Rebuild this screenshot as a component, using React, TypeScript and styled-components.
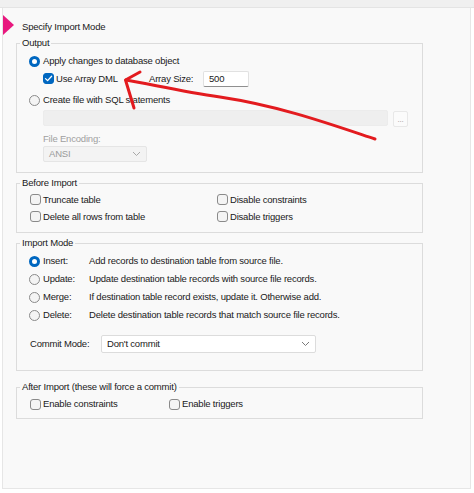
import React from "react";
import styled, { createGlobalStyle } from "styled-components";

const Global = createGlobalStyle`
  html, body { margin: 0; padding: 0; background: #ffffff; }
  body { font-family: "Liberation Sans", Arial, sans-serif; font-size: 9.5px; letter-spacing: -0.2px; color: #1a1a1a; }
  * { box-sizing: border-box; }
`;

const Page = styled.div`
  position: relative;
  width: 474px;
  height: 493px;
  overflow: hidden;
`;

const TopBand = styled.div`
  height: 8px;
  background: #f0f0f0;
  border-bottom: 1px solid #e4e4e4;
`;

const Frame = styled.div`
  margin-left: 2px;
  width: 469px;
  height: 481px;
  background: #f9f9f9;
  border: 1px solid #e6e6e6;
  border-top: none;
`;

const Header = styled.div`
  display: flex;
  align-items: flex-start;
  height: 30px;
  padding-top: 7px;
`;

const Title = styled.span`
  margin-left: 8px;
  margin-top: 2px;
  line-height: 20px;
`;

const Groups = styled.div`
  display: flex;
  flex-direction: column;
  margin-left: 13px;
  margin-top: -1px;
`;

const Group = styled.fieldset<{ $gap?: number }>`
  margin: ${(p) => p.$gap ?? 0}px 0 0 0;
  padding: 0;
  width: 407px;
  border: 1px solid #dcdcdc;
  min-inline-size: 0;
`;

const Legend = styled.legend`
  margin-left: 3px;
  padding: 0 2px;
  line-height: 12px;
  height: 12px;
`;

const Body = styled.div<{ $pt: number; $pb: number; $pl: number }>`
  display: flex;
  flex-direction: column;
  padding: ${(p) => p.$pt}px 0 ${(p) => p.$pb}px ${(p) => p.$pl}px;
`;

const Row = styled.div<{ $h?: number; $mt?: number; $indent?: number }>`
  display: flex;
  align-items: center;
  height: ${(p) => p.$h ?? 18}px;
  margin-top: ${(p) => p.$mt ?? 0}px;
  padding-left: ${(p) => p.$indent ?? 0}px;
`;

const RadioDot = styled.span<{ $on?: boolean }>`
  flex: none;
  width: 11px;
  height: 11px;
  border-radius: 50%;
  background: ${(p) => (p.$on ? "#ffffff" : "#f4f4f4")};
  border: ${(p) => (p.$on ? "3px solid #0067c0" : "1px solid #8a8a8a")};
`;

const Box = styled.span<{ $on?: boolean }>`
  flex: none;
  width: 11px;
  height: 11px;
  border-radius: 3px;
  display: flex;
  align-items: center;
  justify-content: center;
  background: ${(p) => (p.$on ? "#0067c0" : "#f4f4f4")};
  border: 1px solid ${(p) => (p.$on ? "#0067c0" : "#8a8a8a")};
`;

const Text = styled.span<{ $w?: number; $ml?: number; $muted?: boolean }>`
  margin-left: ${(p) => p.$ml ?? 3}px;
  ${(p) => (p.$w ? `width: ${p.$w}px; flex: none;` : "")}
  white-space: nowrap;
  line-height: 12px;
  color: ${(p) => (p.$muted ? "#a0a0a0" : "#1a1a1a")};
`;

const Input = styled.div<{ $w: number; $h: number; $disabled?: boolean }>`
  flex: none;
  display: flex;
  align-items: center;
  width: ${(p) => p.$w}px;
  height: ${(p) => p.$h}px;
  padding-left: 5px;
  background: ${(p) => (p.$disabled ? "#efefef" : "#ffffff")};
  border: 1px solid ${(p) => (p.$disabled ? "#ececec" : "#e1e1e1")};
  border-bottom-color: ${(p) => (p.$disabled ? "#ececec" : "#8f8f8f")};
  border-radius: 2px;
  line-height: 12px;
`;

const Combo = styled.div<{ $w: number; $h: number; $disabled?: boolean }>`
  flex: none;
  display: flex;
  align-items: center;
  justify-content: space-between;
  width: ${(p) => p.$w}px;
  height: ${(p) => p.$h}px;
  padding: 0 5px;
  background: ${(p) => (p.$disabled ? "#f3f3f3" : "#ffffff")};
  border: 1px solid ${(p) => (p.$disabled ? "#e5e5e5" : "#dcdcdc")};
  border-radius: 2px;
  color: ${(p) => (p.$disabled ? "#9a9a9a" : "#1a1a1a")};
  line-height: 12px;
`;

const BrowseBtn = styled.div`
  flex: none;
  width: 15px;
  height: 16px;
  margin-left: 5px;
  margin-top: 2px;
  display: flex;
  align-items: center;
  justify-content: center;
  background: #fbfbfb;
  border: 1px solid #e8e8e8;
  border-radius: 2px;
  color: #9a9a9a;
  font-size: 8px;
  line-height: 8px;
  padding-top: 2px;
`;

const TwoCol = styled.div<{ $col: number; $mt: number; $rh: number }>`
  display: grid;
  grid-template-columns: ${(p) => p.$col}px auto;
  grid-auto-rows: ${(p) => p.$rh}px;
  margin-top: ${(p) => p.$mt}px;
`;

const Cell = styled.div`
  display: flex;
  align-items: center;
`;

const ModeGrid = styled.div`
  display: grid;
  grid-template-columns: 14px 46px auto;
  grid-auto-rows: 18px;
  align-items: center;
  margin-top: 3px;
`;

const Overlay = styled.svg`
  position: absolute;
  left: 0;
  top: 0;
  pointer-events: none;
`;

const Check = () => (
  <svg width="9" height="9" viewBox="0 0 9 9">
    <path d="M1.5 4.6 L3.6 6.6 L7.6 2.3" fill="none" stroke="#fff" strokeWidth="1.3" strokeLinecap="round" strokeLinejoin="round" />
  </svg>
);

const Chevron = ({ color }: { color: string }) => (
  <svg width="9" height="6" viewBox="0 0 9 6">
    <path d="M1 1 L4.5 4.5 L8 1" fill="none" stroke={color} strokeWidth="1" />
  </svg>
);

const Radio = ({ on, label, w }: { on?: boolean; label: string; w?: number }) => (
  <>
    <RadioDot $on={on} />
    <Text $w={w}>{label}</Text>
  </>
);

const CheckItem = ({ on, label }: { on?: boolean; label: string }) => (
  <Cell>
    <Box $on={on}>{on && <Check />}</Box>
    <Text $ml={2}>{label}</Text>
  </Cell>
);

const modes = [
  { k: "Insert:", d: "Add records to destination table from source file.", on: true },
  { k: "Update:", d: "Update destination table records with source file records." },
  { k: "Merge:", d: "If destination table record exists, update it.  Otherwise add." },
  { k: "Delete:", d: "Delete destination table records that match source file records." },
];

export default function App() {
  return (
    <Page>
      <Global />
      <TopBand />
      <Frame>
        <Header>
          <svg width="11" height="20" viewBox="0 0 11 20" style={{ flex: "none" }}>
            <path d="M0 0 L11 10 L0 20 Z" fill="#e8197f" />
          </svg>
          <Title>Specify Import Mode</Title>
        </Header>
        <Groups>
          <Group>
            <Legend>Output</Legend>
            <Body $pt={3} $pb={10} $pl={12}>
              <Row $h={18}>
                <Radio on label="Apply changes to database object" />
              </Row>
              <Row $h={17} $indent={14}>
                <Box $on>
                  <Check />
                </Box>
                <Text $ml={2} $w={93}>Use Array DML</Text>
                <Text $ml={0} $w={54}>Array Size:</Text>
                <Input $w={46} $h={16}>500</Input>
              </Row>
              <Row $h={18} $mt={4}>
                <Radio label="Create file with SQL statements" />
              </Row>
              <Row $h={17} $indent={14}>
                <Input $w={345} $h={16} $disabled />
                <BrowseBtn>...</BrowseBtn>
              </Row>
              <Row $h={14} $mt={6} $indent={14}>
                <Text $ml={0} $muted>File Encoding:</Text>
              </Row>
              <Row $h={16} $indent={14}>
                <Combo $w={104} $h={16} $disabled>
                  <span>ANSI</span>
                  <Chevron color="#a8a8a8" />
                </Combo>
              </Row>
            </Body>
          </Group>

          <Group $gap={4}>
            <Legend>Before Import</Legend>
            <Body $pt={0} $pb={7} $pl={13}>
              <TwoCol $col={187} $mt={2} $rh={17}>
                <CheckItem label="Truncate table" />
                <CheckItem label="Disable constraints" />
                <CheckItem label="Delete all rows from table" />
                <CheckItem label="Disable triggers" />
              </TwoCol>
            </Body>
          </Group>

          <Group $gap={4}>
            <Legend>Import Mode</Legend>
            <Body $pt={0} $pb={17} $pl={12}>
              <ModeGrid>
                {modes.map((m) => (
                  <React.Fragment key={m.k}>
                    <RadioDot $on={m.on} />
                    <Text $ml={0}>{m.k}</Text>
                    <Text $ml={0}>{m.d}</Text>
                  </React.Fragment>
                ))}
              </ModeGrid>
              <Row $h={18} $mt={11} $indent={1}>
                <Text $ml={0} $w={71}>Commit Mode:</Text>
                <Combo $w={215} $h={18}>
                  <span>Don't commit</span>
                  <Chevron color="#7a7a7a" />
                </Combo>
              </Row>
            </Body>
          </Group>

          <Group $gap={10}>
            <Legend>After Import (these will force a commit)</Legend>
            <Body $pt={0} $pb={5} $pl={13}>
              <TwoCol $col={139} $mt={2} $rh={18}>
                <CheckItem label="Enable constraints" />
                <CheckItem label="Enable triggers" />
              </TwoCol>
            </Body>
          </Group>
        </Groups>
      </Frame>
      <Overlay width="474" height="493" viewBox="0 0 474 493">
        <path
          d="M375 139 C 330 124, 280 106, 220 97 C 180 91, 150 84, 126 80"
          fill="none"
          stroke="#e31b1f"
          strokeWidth="3"
          strokeLinecap="round"
        />
        <path d="M140 72 L125.5 80 L134 108" fill="none" stroke="#e31b1f" strokeWidth="3" strokeLinecap="round" strokeLinejoin="round" />
      </Overlay>
    </Page>
  );
}
